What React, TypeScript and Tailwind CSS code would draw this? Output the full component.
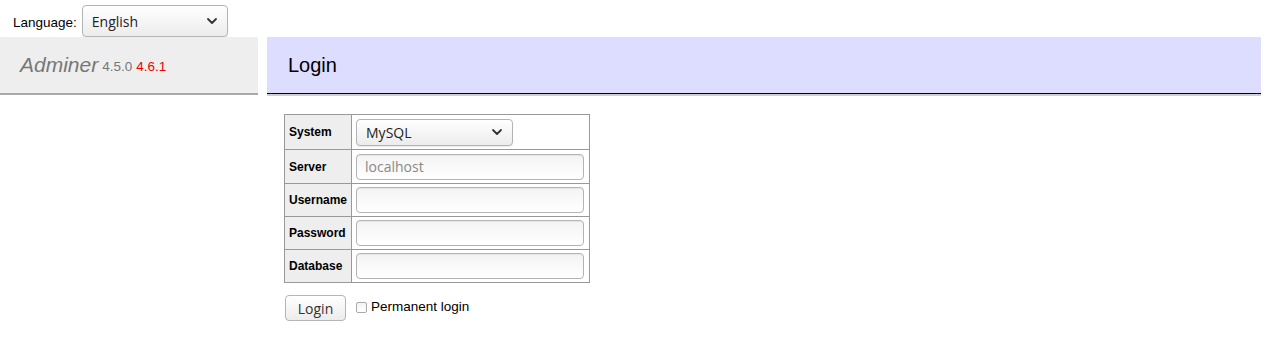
import React from "react";

function Chevron() {
  return (
    <svg width="12" height="8" viewBox="0 0 12 8" className="shrink-0">
      <path d="M2 2 L6 6 L10 2" fill="none" stroke="#333" strokeWidth="1.8" strokeLinecap="round" strokeLinejoin="round" />
    </svg>
  );
}

function FakeSelect({ value, className }: { value: string; className: string }) {
  return (
    <div
      className={
        "flex items-center justify-between rounded-[4px] border border-[#b4b4b4] bg-gradient-to-b from-white to-[#ececec] pl-[9px] pr-[9px] text-[14px] text-[#222] shadow-[0_1px_1px_rgba(0,0,0,0.08)] " +
        className
      }
      style={{ fontFamily: '"Open Sans", "Noto Sans", sans-serif' }}
    >
      <span>{value}</span>
      <Chevron />
    </div>
  );
}

function FakeInput({ placeholder }: { placeholder?: string }) {
  return (
    <div
      className="flex h-[26px] w-[228px] items-center rounded-[4px] border border-[#b4b4b4] bg-gradient-to-b from-[#f3f3f3] to-white pl-[8px] text-[14px] text-[#888] shadow-[inset_0_1px_1px_rgba(0,0,0,0.06)]"
      style={{ fontFamily: '"Open Sans", "Noto Sans", sans-serif' }}
    >
      {placeholder}
    </div>
  );
}

const rows: { label: string; kind: "select" | "input"; placeholder?: string; h: string }[] = [
  { label: "System", kind: "select", h: "h-[35px]" },
  { label: "Server", kind: "input", placeholder: "localhost", h: "h-[34px]" },
  { label: "Username", kind: "input", h: "h-[33px]" },
  { label: "Password", kind: "input", h: "h-[33px]" },
  { label: "Database", kind: "input", h: "h-[33px]" },
];

export default function App() {
  return (
    <div
      className="min-h-[339px] w-[1280px] bg-white text-[13px] text-black"
      style={{ fontFamily: '"Liberation Sans", Arial, sans-serif' }}
    >
      <div className="flex h-[37px] items-start pl-[13px]">
        <span className="mt-[16px] text-[13.5px] leading-none">Language:</span>
        <FakeSelect value="English" className="ml-[5px] mt-[5px] h-[32px] w-[146px]" />
      </div>

      <div className="flex">
        <div className="flex h-[58px] w-[258px] items-center border-b-2 border-[#a9a9a9] bg-[#eeeeee] pl-[20px]">
          <span className="text-[21px] italic text-[#777]">Adminer</span>
          <span className="ml-[4px] mt-[4px] text-[13.5px] text-[#777]">4.5.0</span>
          <span className="ml-[4px] mt-[4px] text-[13.5px] text-[#e00]">4.6.1</span>
        </div>

        <div className="ml-[9px] w-[994px]">
          <div className="border-b-2 border-[#d0d0d0]">
            <h2 className="flex h-[57px] items-center border-b border-black bg-[#ddddff] pl-[21px] text-[20px] font-normal">
              Login
            </h2>
          </div>

          <div className="ml-[17px] mt-[18px]">
            <table className="border-collapse border border-[#999]">
              <tbody>
                {rows.map((r) => (
                  <tr key={r.label} className={r.h}>
                    <th className="w-[67px] border border-[#999] bg-[#eeeeee] px-[4px] text-left text-[12px] font-bold">
                      {r.label}
                    </th>
                    <td className="w-[238px] border border-[#999] px-[4px] align-middle">
                      {r.kind === "select" ? (
                        <FakeSelect value="MySQL" className="h-[27px] w-[157px]" />
                      ) : (
                        <FakeInput placeholder={r.placeholder} />
                      )}
                    </td>
                  </tr>
                ))}
              </tbody>
            </table>

            <div className="mt-[12px] flex items-center">
              <button
                className="ml-[1px] flex h-[26px] w-[61px] items-center justify-center rounded-[4px] border border-[#b4b4b4] bg-gradient-to-b from-white to-[#ececec] text-[14px] text-[#333]"
                style={{ fontFamily: '"Open Sans", "Noto Sans", sans-serif' }}
              >
                Login
              </button>
              <span className="-mt-[2px] ml-[10px] inline-block h-[11px] w-[11px] rounded-[2px] border border-[#aaa] bg-gradient-to-b from-[#f3f3f3] to-white" />
              <span className="-mt-[1px] ml-[4px] text-[13.5px]">Permanent login</span>
            </div>
          </div>
        </div>
      </div>
    </div>
  );
}
